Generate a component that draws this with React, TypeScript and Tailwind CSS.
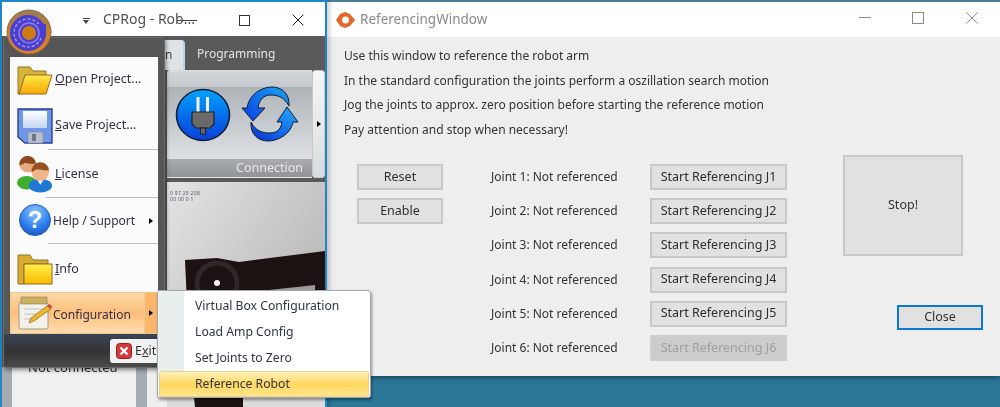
import React from "react";

const font = "font-['Noto_Sans',sans-serif]";

const winBtn =
  "h-[26px] bg-[#e1e1e1] border-2 border-[#c8c8c8] text-[12.5px] text-[#2e2e2e] flex items-center justify-center";

const FolderOpen = () => (
  <svg width="36" height="32" viewBox="0 0 36 32">
    <defs>
      <linearGradient id="fo" x1="0" y1="0" x2="0" y2="1">
        <stop offset="0" stopColor="#ffe94a" />
        <stop offset="1" stopColor="#f5a800" />
      </linearGradient>
    </defs>
    <path d="M1 30V3h12l3 4h13v5H9L3 30z" fill="#d9b23a" stroke="#8d7330" />
    <path d="M8 11h27l-6 19H2z" fill="url(#fo)" stroke="#8d6a2a" />
  </svg>
);

const FolderInfo = () => (
  <svg width="36" height="32" viewBox="0 0 36 32">
    <defs>
      <linearGradient id="fi" x1="0" y1="0" x2="0" y2="1">
        <stop offset="0" stopColor="#fff04a" />
        <stop offset="1" stopColor="#fdb900" />
      </linearGradient>
    </defs>
    <path d="M1 31V2h12l3 5h15v4H7v20z" fill="#d8ac2c" stroke="#8d7330" />
    <rect x="7" y="11" width="28" height="20" fill="url(#fi)" stroke="#8d6a2a" />
  </svg>
);

const Floppy = () => (
  <svg width="36" height="36" viewBox="0 0 36 36">
    <defs>
      <linearGradient id="fl" x1="0" y1="0" x2="0" y2="1">
        <stop offset="0" stopColor="#ffffff" />
        <stop offset="1" stopColor="#c4d6f2" />
      </linearGradient>
    </defs>
    <path d="M1 1h34v34H8l-7-6z" fill="#6f97e6" stroke="#2a3f9c" strokeWidth="1.4" />
    <rect x="6" y="3" width="24" height="17" fill="url(#fl)" />
    <rect x="11" y="24" width="15" height="11" fill="#b9bfca" stroke="#7f8795" strokeWidth="0.6" />
    <rect x="15" y="26" width="4" height="7" fill="#6d7685" />
  </svg>
);

const Users = () => (
  <svg width="38" height="38" viewBox="0 0 38 38">
    <ellipse cx="11" cy="28" rx="10" ry="7" fill="#3fae2f" />
    <circle cx="12" cy="9" r="8.500" fill="#e8a77c" />
    <path d="M3.500 10a8.500 8.500 0 0 1 17-2c-5 2-9-1-12 0-2 1-3 2-5 2z" fill="#8c4a1e" />
    <ellipse cx="25" cy="31" rx="12" ry="7" fill="#1f77d6" />
    <path d="M21 24h8l-4 6z" fill="#e9f1fb" />
    <circle cx="25" cy="17" r="9" fill="#f0b48a" />
    <path d="M16 17a9 9 0 0 1 18-2c-5 1-10-1-13-1-2 1-3 2-5 3z" fill="#96521f" />
  </svg>
);

const Help = () => (
  <svg width="34" height="36" viewBox="0 0 34 36">
    <defs>
      <radialGradient id="hp" cx="0.5" cy="0.25" r="0.8">
        <stop offset="0" stopColor="#8ec9ff" />
        <stop offset="0.6" stopColor="#2f80ee" />
        <stop offset="1" stopColor="#1650c0" />
      </radialGradient>
    </defs>
    <circle cx="17" cy="17" r="15.500" fill="url(#hp)" stroke="#2b5fb8" />
    <text x="17" y="25" textAnchor="middle" fontSize="24" fontWeight="700" fill="#fff" fontFamily="Liberation Sans">
      ?
    </text>
  </svg>
);

const Notepad = () => (
  <svg width="34" height="34" viewBox="0 0 34 34">
    <rect x="1" y="6" width="29" height="27" rx="2" fill="#f4f1e8" stroke="#9a9a8e" />
    <rect x="3" y="1" width="26" height="7" fill="#c9b062" stroke="#8f8048" strokeWidth="0.6" />
    <path d="M6 13h19M6 18h19M6 23h14" stroke="#b9c3cf" strokeWidth="1.2" />
    <path d="M11 27l2-5L29 10l4 3-17 12z" fill="#efb62f" stroke="#8d6a20" strokeWidth="0.7" />
    <path d="M29 10l4 3 1-3-3-2z" fill="#d6403a" />
  </svg>
);

const Plug = () => (
  <svg width="56" height="54" viewBox="0 0 56 54">
    <defs>
      <linearGradient id="pl" x1="0" y1="0" x2="0" y2="1">
        <stop offset="0" stopColor="#00a2ff" />
        <stop offset="1" stopColor="#0a3fd8" />
      </linearGradient>
    </defs>
    <ellipse cx="28" cy="27" rx="26.500" ry="25.500" fill="url(#pl)" stroke="#10203a" strokeWidth="1.6" />
    <rect x="21.500" y="9" width="3" height="16" fill="#f3f3f3" />
    <rect x="31" y="9" width="3" height="16" fill="#f3f3f3" />
    <path d="M17 24h22v12l-4 4H21l-4-4z" fill="#6a6a6a" stroke="#222" strokeWidth="1.2" />
    <rect x="25.500" y="40" width="5" height="6" fill="#666" stroke="#222" />
  </svg>
);

// two crescents, head of one at the left pointing down, other at the right pointing up
const Refresh = () => (
  <svg width="58" height="58" viewBox="0 0 58 58">
    <defs>
      <linearGradient id="rt" x1="0" y1="1" x2="1" y2="0">
        <stop offset="0" stopColor="#0a3ce6" />
        <stop offset="1" stopColor="#18a4f2" />
      </linearGradient>
      <linearGradient id="rb" x1="0" y1="1" x2="1" y2="0">
        <stop offset="0" stopColor="#0a2fd0" />
        <stop offset="1" stopColor="#22b0ff" />
      </linearGradient>
    </defs>
    <g stroke="#101c30" strokeWidth="1">
      <path
        d="M5 22C7 8 20 1 30 1c10 0 18 7 17 19-5-10-13-11-19-11-6 0-11 5-12 13h7L11 35 0 22z"
        fill="url(#rt)"
      />
      <path
        d="M40 36c-1 8-6 11-12 11-6 0-14-1-19-11-1 12 7 19 17 19 10 0 23-7 25-19h5L45 21 35 36z"
        fill="url(#rb)"
      />
    </g>
  </svg>
);

const Orb = () => (
  <svg width="46" height="46" viewBox="0 0 46 46">
    <defs>
      <linearGradient id="or" x1="0" y1="0" x2="0" y2="1">
        <stop offset="0" stopColor="#9a7a52" />
        <stop offset="0.5" stopColor="#c9802e" />
        <stop offset="1" stopColor="#e8821c" />
      </linearGradient>
    </defs>
    <circle cx="23" cy="23" r="22" fill="url(#or)" stroke="#8b6a45" />
    <circle cx="22" cy="24" r="18" fill="#4a3fd0" />
    <circle cx="22" cy="24" r="14" fill="none" stroke="#b9a8ee" strokeWidth="1.2" strokeDasharray="3 2" />
    <path d="M32 15h8v12h-6z" fill="#4a3fd0" />
    <circle cx="23" cy="24" r="10" fill="none" stroke="#8b7be4" strokeWidth="1.500" />
    <circle cx="23" cy="24" r="7" fill="#cf7d12" />
  </svg>
);

const ExitIcon = () => (
  <svg width="16" height="16" viewBox="0 0 16 16">
    <rect x="0.500" y="0.500" width="15" height="15" rx="3" fill="#d8383a" stroke="#8e2222" />
    <path d="M4.500 4.500l7 7m0-7l-7 7" stroke="#fff" strokeWidth="2.400" />
  </svg>
);

const Arrow = () => (
  <span className="w-0 h-0 border-y-[3px] border-y-transparent border-l-[4px] border-l-black" />
);

const Sep = ({ className }: { className: string }) => (
  <div className={`h-[1px] bg-[#b9bec4] ${className}`} />
);

const CloseX = ({ color, size }: { color: string; size: number }) => (
  <svg width={size} height={size} viewBox="0 0 12 12">
    <path d="M0.500 0.500l11 11M11.500 0.500l-11 11" stroke={color} strokeWidth="1" />
  </svg>
);

const LeftWindow = () => (
  <div className="absolute left-0 top-0 w-[327px] h-[407px] flex flex-col bg-[#5a5a5a] border-t-2 border-x-2 border-[#1e87c9] shadow-[3px_0_4px_rgba(0,0,0,0.18)] overflow-hidden">
    {/* title bar */}
    <div className="h-[34px] bg-white flex items-center shrink-0 relative">
      <div className="ml-[80px] mt-[3px] w-[8px] flex flex-col items-center gap-[1px]">
        <div className="w-[7px] h-[1px] bg-[#444]" />
        <div className="w-0 h-0 border-x-[3px] border-x-transparent border-t-[4px] border-t-[#444]" />
      </div>
      <span className="ml-[13px] text-[14px] text-[#505050] leading-none">CPRog - Rob...</span>
      <div className="absolute left-[175px] top-[18px] w-[20px] h-[1px] bg-[#444]" />
      <div className="absolute left-[237px] top-[13px] w-[11px] h-[11px] border border-[#333]" />
      <div className="absolute left-[290px] top-[12px]">
        <CloseX color="#222222" size={12} />
      </div>
    </div>

    {/* tabs */}
    <div className="h-[34px] shrink-0 flex items-end pl-[163px]">
      <div className="w-[20px] h-[30px] bg-[#dfe3e6] border-r-2 border-[#b5d8ea] rounded-tr-[4px] flex items-center text-[12px] text-[#444]">
        n
      </div>
      <div className="ml-[12px] h-[30px] text-[12px] text-[#e4e4e4] leading-[28px]">Programming</div>
    </div>

    {/* ribbon */}
    <div className="h-[108px] shrink-0 ml-[165px] flex">
      <div className="w-[145px] flex flex-col rounded-tl-[3px] border-t-2 border-[#d8dadc]">
        <div className="h-[87px] flex flex-col relative">
          <div className="h-[15px] bg-gradient-to-b from-[#d2d5d8] to-[#c4c8cc]" />
          <div className="flex-1 bg-gradient-to-b from-[#aeb3b8] to-[#dde1e3]" />
          <div className="absolute inset-0 flex items-center pl-[8px] pb-[2px] gap-[11px]">
            <Plug />
            <Refresh />
          </div>
        </div>
        <div className="h-[18px] bg-gradient-to-b from-[#a9adaf] to-[#909496] text-[12.5px] text-[#e8e8e8] leading-[18px] text-right pr-[9px]">
          Connection
        </div>
        <div className="h-[1px] bg-[#e8e8e8]" />
      </div>
      <div className="w-[13px] h-[108px] bg-gradient-to-b from-[#f6f6f6] to-[#d9dcde] rounded-[3px] border border-[#c8c8c8] flex items-center justify-center">
        <Arrow />
      </div>
    </div>

    {/* status panel + 3d view */}
    <div className="flex-1 mt-[4px] flex min-h-0">
      <div className="w-[165px] shrink-0 flex items-end bg-[#5a5a5a]">
        <div className="w-full h-[40px] flex bg-[#a4acb1]">
          <div className="ml-[10px] w-[124px] bg-[#f0f0f0] text-[13px] text-[#333] pl-[16px] leading-[1px]">
            Not connected
          </div>
          <div className="ml-[11px] flex-1 bg-[#eeeeee]" />
        </div>
      </div>
      <div className="flex-1 relative bg-gradient-to-br from-[#e4e4e4] to-[#a8a8a8] overflow-hidden">
        <div className="absolute left-0 bottom-0 w-full h-[30px] bg-[#dcdcdc]" />
        <div className="absolute left-[3px] top-[8px] text-[5px] leading-[6px] text-[#556070] tracking-[0.3px]">
          0 97 25 208
          <br />
          00 00 0 1
        </div>
        <svg className="absolute left-0 top-0" width="160" height="225" viewBox="0 0 160 225">
          <path d="M18 78l32-2 22 4 86-11V190H76V225H28l-6-60z" fill="#1c1212" />
          <circle cx="50" cy="101" r="20" fill="none" stroke="#2e2828" strokeWidth="5" />
          <circle cx="50" cy="101" r="3" fill="#f4f4f4" />
          <path d="M102 108l46-5v8h-46z" fill="#9a9a9a" />
        </svg>
      </div>
    </div>
  </div>
);

type AppItem = {
  icon: React.ReactNode;
  label: React.ReactNode;
  h: string;
  text: string;
  arrow?: boolean;
};

const AppMenu = () => {
  const row = (it: AppItem) => (
    <div className={`flex items-center ${it.h} pl-[6px] ${it.text} text-[#30304a]`}>
      <div className="w-[37px] flex justify-center shrink-0">{it.icon}</div>
      <span>{it.label}</span>
      {it.arrow && (
        <span className="ml-auto mr-[5px] flex">
          <Arrow />
        </span>
      )}
    </div>
  );
  return (
    <div className="absolute left-[3px] top-[37px] w-[162px] h-[331px] bg-[#565656] rounded-[3px] border border-[#6a6a6a] shadow-[1px_2px_4px_rgba(0,0,0,0.45)] flex flex-col">
      <div className="mt-[19px] mx-[6px] h-[277px] bg-[#fbfbfb] flex flex-col">
        <div className="h-[3px]" />
        {row({ icon: <FolderOpen />, label: <span className="ml-[2px]"><u>O</u>pen Project...</span>, h: "h-[39px]", text: "text-[12.5px]" })}
        {row({ icon: <Floppy />, label: <span className="ml-[2px]"><u>S</u>ave Project...</span>, h: "h-[50px] pt-[3px]", text: "text-[12.5px]" })}
        <Sep className="ml-[38px]" />
        {row({ icon: <Users />, label: <span className="ml-[2px]"><u>L</u>icense</span>, h: "h-[47px] pt-[1px]", text: "text-[12.5px]" })}
        <Sep className="ml-[36px]" />
        {row({ icon: <Help />, label: "Help / Support", h: "h-[45px] pt-[1px]", text: "text-[12px]", arrow: true })}
        <Sep className="ml-[38px]" />
        {row({ icon: <FolderInfo />, label: <span className="ml-[2px]"><u>I</u>nfo</span>, h: "h-[48px] pt-[2px]", text: "text-[12.5px]" })}
        <div className="h-[42px] mt-auto bg-gradient-to-b from-[#fbd9a8] via-[#fdbf7a] to-[#fedcb0] border border-[#e6c98a] flex items-center text-[12px] text-[#30304a] pl-[5px]">
          <div className="w-[37px] flex justify-center shrink-0">
            <Notepad />
          </div>
          <span className="pt-[3px]">Configuration</span>
          <div className="ml-auto w-[13px] h-full border-l border-[#e9cf8e] bg-[#fdb56c] flex items-center justify-center">
            <Arrow />
          </div>
        </div>
      </div>
      <div className="flex-1 bg-gradient-to-b from-[#3a4354] via-[#343434] to-[#4a4a4a] flex justify-end pt-[5px] rounded-b-[3px]">
        <div className="w-[54px] h-[24px] bg-[#f2f2f2] rounded-l-[3px] flex items-center pl-[6px] gap-[3px] text-[12.5px] text-[#333]">
          <ExitIcon />
          <span>E<u>x</u>it</span>
        </div>
      </div>
    </div>
  );
};

const SubMenu = () => (
  <div className="absolute left-[157px] top-[290px] w-[214px] h-[108px] bg-white rounded-[3px] border border-[#a8a8a8] shadow-[1px_2px_3px_rgba(0,0,0,0.4)] flex text-[12.2px] text-[#2f3344]">
    <div className="w-full flex flex-col">
      <div className="h-[2px] w-[26px] bg-[#e9eeee]" />
      {["Virtual Box Configuration", "Load Amp Config", "Set Joints to Zero"].map((t) => (
        <div key={t} className="h-[26px] flex items-center">
          <div className="w-[26px] h-full bg-[#e9eeee] shrink-0" />
          <span className="ml-[11px]">{t}</span>
        </div>
      ))}
      <div className="mx-[1px] h-[26px] flex items-center bg-gradient-to-b from-[#fff2b8] via-[#ffd75c] to-[#ffe48a] border border-[#e8d48a] rounded-[2px]">
        <span className="ml-[35px]">Reference Robot</span>
      </div>
    </div>
  </div>
);

const joints = [1, 2, 3, 4, 5, 6];

const RefWindow = () => (
  <div className="absolute left-[327px] top-0 w-[673px] h-[376px] flex flex-col border-t-2 border-[#4a7b91] bg-[#eeeeee] shadow-[0_2px_5px_rgba(0,0,0,0.4)]">
    <div className="h-[35px] bg-white shrink-0 flex items-center relative">
      <svg className="ml-[9px]" width="19" height="16" viewBox="0 0 19 16">
        <path d="M0 8l4-6 5-2 5 2 5 6-5 6-5 2-5-2z" fill="#e8662a" />
        <circle cx="9.500" cy="8" r="3.500" fill="#fff" />
      </svg>
      <span className="ml-[5px] text-[13.5px] text-[#8a8a8a] leading-none">ReferencingWindow</span>
      <div className="absolute left-[532px] top-[15px] w-[12px] h-[1px] bg-[#8a8a8a]" />
      <div className="absolute left-[585px] top-[10px] w-[12px] h-[12px] border border-[#8a8a8a]" />
      <div className="absolute left-[639px] top-[10px]">
        <CloseX color="#8a8a8a" size={12} />
      </div>
    </div>

    <div className="pl-[17px] pt-[7px] text-[12px] leading-[24.5px] text-[#333]">
      <div>Use this window to reference the robot arm</div>
      <div>In the standard configuration the joints perform a oszillation search motion</div>
      <div>Jog the joints to approx. zero position before starting the reference motion</div>
      <div>Pay attention and stop when necessary!</div>
    </div>

    <div className="mt-[13px] pl-[30px] flex text-[12px] text-[#333]">
      <div className="w-[86px] pt-[9px] flex flex-col gap-[8px]">
        <div className={winBtn}>Reset</div>
        <div className={winBtn}>Enable</div>
      </div>
      <div className="ml-[48px] w-[159px] pt-[9px] flex flex-col gap-[8.200px]">
        {joints.map((j) => (
          <div key={j} className="h-[26px] flex items-center">
            Joint {j}: Not referenced
          </div>
        ))}
      </div>
      <div className="w-[137px] pt-[9px] flex flex-col gap-[8.200px]">
        {joints.map((j) =>
          j === 6 ? (
            <div
              key={j}
              className="h-[26px] bg-[#cccccc] border-2 border-[#cfcfcf] text-[12.5px] text-[#a0a0a0] flex items-center justify-center"
            >
              Start Referencing J6
            </div>
          ) : (
            <div key={j} className={winBtn}>
              Start Referencing J{j}
            </div>
          )
        )}
      </div>
      <div className="ml-[56px] flex flex-col text-[12.5px]">
        <div className="w-[120px] h-[101px] bg-[#e1e1e1] border-2 border-[#c8c8c8] flex items-center justify-center">
          Stop!
        </div>
        <div className="ml-[54px] mt-[49px] w-[86px] h-[25px] bg-[#e1e1e1] border-2 border-[#0a78d7] flex items-center justify-center">
          Close
        </div>
      </div>
    </div>
  </div>
);

export default function App() {
  return (
    <div className={`relative w-[1000px] h-[407px] overflow-hidden bg-[#2b7899] blur-[0.4px] ${font}`}>
      <RefWindow />
      <LeftWindow />
      <AppMenu />
      <div className="absolute left-[6px] top-[9px]">
        <Orb />
      </div>
      <SubMenu />
    </div>
  );
}
